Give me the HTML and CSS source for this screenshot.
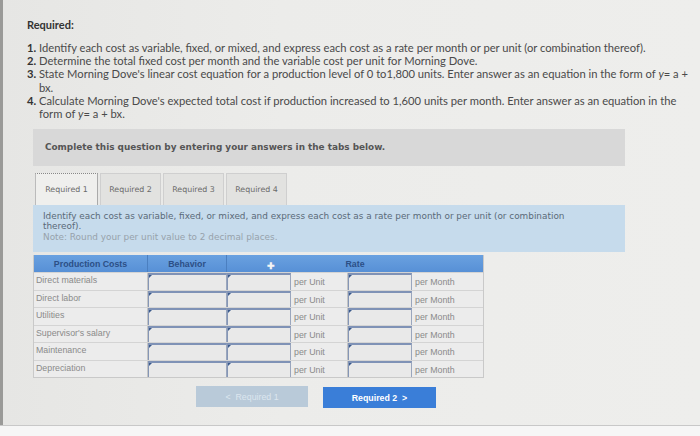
FILE: index.html
```html
<!DOCTYPE html>
<html>
<head>
<meta charset="utf-8">
<link rel="stylesheet" href="styles.css">
</head>
<body>
<div class="page">
  <div class="required">
    <h2 class="req-title">Required:</h2>
    <ol class="req-list">
      <li><b>1.</b> Identify each cost as variable, fixed, or mixed, and express each cost as a rate per month or per unit (or combination thereof).</li>
      <li><b>2.</b> Determine the total fixed cost per month and the variable cost per unit for Morning Dove.</li>
      <li><b>3.</b> State Morning Dove's linear cost equation for a production level of 0 to1,800 units. Enter answer as an equation in the form of <i>y</i>= a +<br><span class="indent">bx.</span></li>
      <li><b>4.</b> Calculate Morning Dove's expected total cost if production increased to 1,600 units per month. Enter answer as an equation in the<br><span class="indent">form of <i>y</i>= a + bx.</span></li>
    </ol>
  </div>

  <div class="complete">Complete this question by entering your answers in the tabs below.</div>

  <div class="tabs">
    <div class="tab active">Required 1</div>
    <div class="tab">Required 2</div>
    <div class="tab">Required 3</div>
    <div class="tab">Required 4</div>
  </div>

  <div class="panel">
    <div>Identify each cost as variable, fixed, or mixed, and express each cost as a rate per month or per unit (or combination thereof).</div>
    <div class="note">Note: Round your per unit value to 2 decimal places.</div>
  </div>

  <div class="table">
    <div class="hrow">
      <div class="h h-label">Production Costs</div>
      <div class="h h-beh">Behavior</div>
      <div class="h h-rate">Rate<span class="cursor">✚</span></div>
    </div>
    <div class="row"><div class="c-label">Direct materials</div><div class="inp w1"></div><div class="inp w2"></div><div class="unit w3">per Unit</div><div class="inp w4"></div><div class="unit w5">per Month</div></div>
    <div class="row"><div class="c-label">Direct labor</div><div class="inp w1"></div><div class="inp w2"></div><div class="unit w3">per Unit</div><div class="inp w4"></div><div class="unit w5">per Month</div></div>
    <div class="row"><div class="c-label">Utilities</div><div class="inp w1"></div><div class="inp w2"></div><div class="unit w3">per Unit</div><div class="inp w4"></div><div class="unit w5">per Month</div></div>
    <div class="row"><div class="c-label">Supervisor's salary</div><div class="inp w1"></div><div class="inp w2"></div><div class="unit w3">per Unit</div><div class="inp w4"></div><div class="unit w5">per Month</div></div>
    <div class="row"><div class="c-label">Maintenance</div><div class="inp w1"></div><div class="inp w2"></div><div class="unit w3">per Unit</div><div class="inp w4"></div><div class="unit w5">per Month</div></div>
    <div class="row"><div class="c-label">Depreciation</div><div class="inp w1"></div><div class="inp w2"></div><div class="unit w3">per Unit</div><div class="inp w4"></div><div class="unit w5">per Month</div></div>
  </div>

  <div class="nav">
    <div class="btn prev">&lt;&nbsp;&nbsp;Required 1</div>
    <div class="btn next">Required 2&nbsp;&nbsp;&gt;</div>
  </div>
</div>
<div class="bottom"></div>
</body>
</html>
```
FILE: styles.css
```css
html, body {
  margin: 0;
  padding: 0;
}
body {
  width: 700px;
  height: 436px;
  overflow: hidden;
  background: #ebebe9;
  font-family: "Liberation Sans", Arial, sans-serif;
}
.page {
  height: 425px;
  box-sizing: border-box;
  border-left: 3px solid #9a9a98;
  background: linear-gradient(90deg, #e6e6e4 0%, #ececea 40%, #eeeeec 100%);
  padding: 18px 0 0 24px;
}
.req-title {
  margin: 0;
  font-family: Lato, "Open Sans", sans-serif;
  font-weight: 700;
  font-size: 11px;
  color: #333;
  line-height: 14px;
}
.req-list {
  list-style: none;
  margin: 9px 0 0 0;
  padding: 0;
  font-family: Lato, "Open Sans", sans-serif;
  font-size: 11.2px;
  line-height: 13.2px;
  color: #4a4a4a;
  width: 676px;
}
.req-list li { white-space: nowrap; }
.req-list b { color: #333; }
.indent { padding-left: 12px; }
.complete {
  margin: 9px 0 0 6px;
  width: 592px;
  height: 37px;
  box-sizing: border-box;
  background: #d8d8d8;
  padding: 13px 0 0 12px;
  font-family: "DejaVu Sans", Verdana, sans-serif;
  font-weight: 700;
  font-size: 8.9px;
  color: #555;
}
.tabs {
  display: flex;
  margin: 7px 0 0 8px;
  gap: 2px;
  height: 32px;
}
.tab {
  box-sizing: border-box;
  width: 61px;
  height: 32px;
  background: #e2e2e0;
  border: 1px solid #cfcfcf;
  border-bottom: none;
  font-family: "DejaVu Sans", Verdana, sans-serif;
  font-size: 7.9px;
  color: #6a6a6a;
  display: flex;
  align-items: center;
  justify-content: center;
}
.tab.active {
  width: 63px;
  background: #efefed;
  border-top: 1px dotted #888;
  border-left: 1px solid #bbb;
  border-right: 1px solid #aaa;
}
.panel {
  margin: 0 0 0 6px;
  width: 592px;
  height: 47px;
  box-sizing: border-box;
  background: #c6dbec;
  padding: 6px 40px 0 10px;
  font-family: "DejaVu Sans", Verdana, sans-serif;
  font-size: 8.9px;
  line-height: 10px;
  color: #5a6a78;
}
.panel .note {
  color: #97a2ab;
  margin-top: 1px;
}
.table {
  margin: 3px 0 0 6px;
  width: 449px;
  border: 1px solid #c9c9c9;
  border-top: none;
}
.hrow {
  display: flex;
  height: 17px;
  background: linear-gradient(#6aa1e0, #5790d6);
}
.h {
  box-sizing: border-box;
  display: flex;
  align-items: center;
  justify-content: center;
  font-family: "Liberation Sans", Arial, sans-serif;
  font-weight: 700;
  font-size: 8.8px;
  color: #2c4f86;
  border-right: 1px solid #4b7fc0;
}
.h-label { width: 114px; }
.h-beh { width: 79px; }
.h-rate {
  width: 256px;
  border-right: none;
  position: relative;
}
.cursor {
  position: absolute;
  left: 40px;
  top: 6px;
  color: #f4f4f4;
  font-size: 9px;
  font-weight: 700;
}
.row {
  display: flex;
  height: 17.5px;
  border-top: 1px solid #d4d4d4;
  box-sizing: border-box;
}
.row > div { box-sizing: border-box; }
.c-label {
  width: 114px;
  font-size: 8.8px;
  color: #8a8a8a;
  padding: 2px 0 0 2px;
  border-right: 1px solid #c4c4c4;
  background: #ececec;
}
.inp {
  position: relative;
  background: #e9e9e9;
  border-top: 2px solid #7f92b6;
  border-left: 1px solid #8596b6;
  border-right: 1px solid #9aa6bd;
}
.inp::before {
  content: "";
  position: absolute;
  left: 0;
  top: 0;
  border-top: 3px solid #3b5a8c;
  border-right: 3px solid transparent;
}
.w1 { width: 79px; }
.w2 { width: 64px; }
.w3 { width: 57px; }
.w4 { width: 64px; }
.w5 { width: 71px; }
.unit {
  font-size: 8.8px;
  color: #8a8a8a;
  padding: 4px 0 0 3px;
  background: #ececec;
  border-right: 1px solid #c4c4c4;
}
.w5.unit { border-right: none; }
.nav {
  display: flex;
  margin: 8px 0 0 169px;
  gap: 15px;
}
.btn {
  height: 21px;
  width: 112px;
  display: flex;
  align-items: center;
  justify-content: center;
  font-family: "Liberation Sans", Arial, sans-serif;
  font-size: 8.8px;
}
.prev {
  background: #b9cad9;
  color: #dce6ef;
}
.next {
  background: #3a7ed8;
  color: #fff;
  font-weight: 700;
  margin-top: 1px;
  width: 113px;
}
.bottom {
  height: 11px;
  border-top: 1px solid #c8c8c8;
  background: #f6f6f6;
}
```
